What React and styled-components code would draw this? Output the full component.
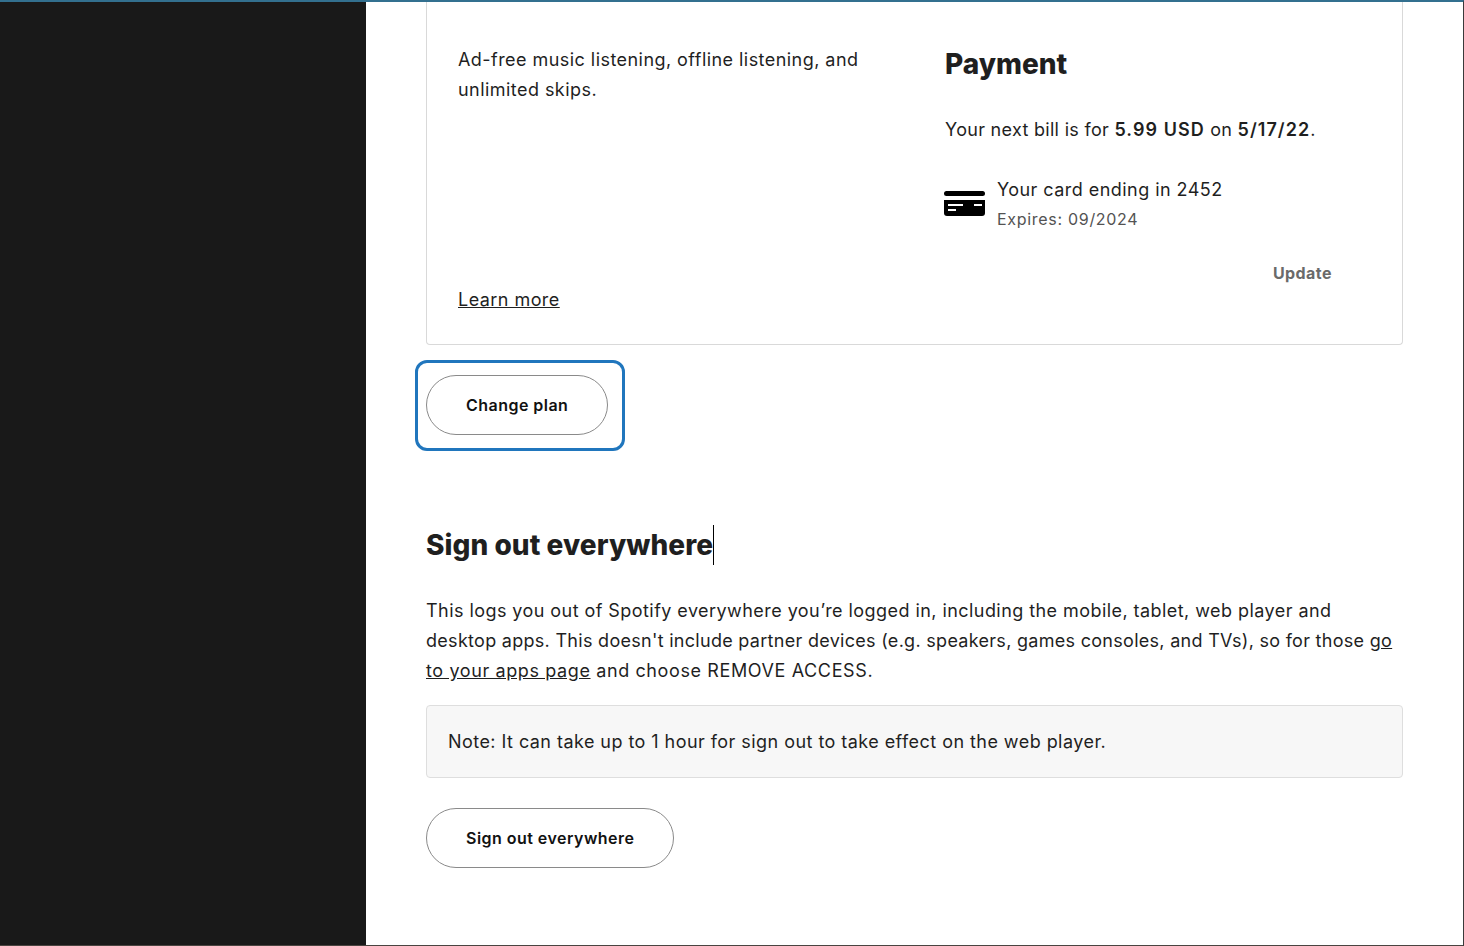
import React from "react";
import styled, { createGlobalStyle } from "styled-components";

const GlobalStyle = createGlobalStyle`
  html, body {
    margin: 0;
    height: 946px;
    overflow: hidden;
    background: #fff;
  }
  body {
    font-family: "Inter", "Liberation Sans", sans-serif;
    font-size: 18px;
    line-height: 30px;
    letter-spacing: 0.45px;
    color: #1f1f1f;
  }
`;

const Page = styled.div`
  display: flex;
  flex-direction: column;
  width: 1464px;
  height: 946px;
  box-sizing: border-box;
  border-top: 2px solid #33708f;
  border-right: 1px solid #3a3a3a;
  border-bottom: 1px solid #4a4440;
`;
const Layout = styled.div`
  display: flex;
  flex: 1;
  min-height: 0;
`;
const Sidebar = styled.aside`
  width: 366px;
  flex: none;
  background: #191919;
`;
const Main = styled.main`
  flex: 1;
  padding: 0 60px;
`;

const Card = styled.section`
  display: grid;
  grid-template-columns: 487px 1fr;
  box-sizing: border-box;
  height: 343px;
  padding: 43px 31px 29px;
  border: 1px solid #d9d9d9;
  border-top: none;
  border-radius: 0 0 4px 4px;
`;
const PlanColumn = styled.div`
  display: flex;
  flex-direction: column;
  justify-content: space-between;
  align-items: flex-start;
`;
const PlanText = styled.p`
  width: 420px;
  margin: 0;
`;
const PaymentColumn = styled.div`
  display: flex;
  flex-direction: column;
`;
const CardTitle = styled.h2`
  margin: -1px 0 31px;
  font-size: 28px;
  line-height: 40px;
  font-weight: 800;
  letter-spacing: 0;
`;
const Bill = styled.p`
  margin: 0 0 30px;
  letter-spacing: 0.3px;
  b {
    font-weight: 600;
    letter-spacing: 1.05px;
  }
`;
const CardRow = styled.div`
  display: flex;
  align-items: center;
  gap: 12px;
  margin-left: -1px;
`;
const CardIcon = styled.svg`
  width: 41px;
  height: 28px;
  flex: none;
  margin-bottom: 1px;
`;
const CardInfo = styled.div`
  display: flex;
  flex-direction: column;
`;
const Expires = styled.span`
  font-size: 16px;
  line-height: 29px;
  letter-spacing: 0.7px;
  color: #535353;
`;
const UpdateLink = styled.a`
  align-self: flex-end;
  margin: 24px 39px 0 0;
  font-size: 16px;
  font-weight: 700;
  color: #6a6a6a;
`;
const TextLink = styled.a`
  color: inherit;
  text-decoration: underline;
`;

const PillButton = styled.button`
  position: relative;
  display: block;
  box-sizing: border-box;
  height: 60px;
  padding: 0 39px;
  background: #fff;
  border: 1px solid #8a8a8a;
  border-radius: 30px;
  font: 600 16px/1 "Inter", "Liberation Sans", sans-serif;
  letter-spacing: 0.47px;
  color: #111;

  ${(p) =>
    p.$focused &&
    `
    &::after {
      content: "";
      position: absolute;
      top: -16px;
      right: -18px;
      bottom: -17px;
      left: -12px;
      border: 3px solid #2076bd;
      border-radius: 12px;
    }
  `}
`;
const ChangePlanRow = styled.div`
  margin-top: 30px;
`;

const SectionTitle = styled.h2`
  width: fit-content;
  margin: 90px 0 31px;
  font-size: 28px;
  line-height: 40px;
  font-weight: 800;
  letter-spacing: 0.05px;
  border-right: 1px solid #000;
`;
const Description = styled.p`
  margin: 0;
`;
const DescriptionLine = styled.span`
  display: block;
  white-space: nowrap;
  letter-spacing: ${(p) => p.$spacing}px;
`;
const Note = styled.div`
  box-sizing: border-box;
  height: 73px;
  margin: 19px 0 30px;
  padding: 21px;
  background: #f7f7f7;
  border: 1px solid #dedede;
  border-radius: 4px;
`;

export default function App() {
  return (
    <>
      <GlobalStyle />
      <Page>
        <Layout>
          <Sidebar />
          <Main>
            <Card>
              <PlanColumn>
                <PlanText>Ad-free music listening, offline listening, and unlimited skips.</PlanText>
                <TextLink href="#">Learn more</TextLink>
              </PlanColumn>
              <PaymentColumn>
                <CardTitle>Payment</CardTitle>
                <Bill>
                  Your next bill is for <b>5.99 USD</b> on <b>5/17/22</b>.
                </Bill>
                <CardRow>
                  <CardIcon viewBox="0 0 41 28">
                    <rect x="0" y="1" width="41" height="5" rx="2.5" fill="#000" />
                    <path d="M0 10h41v13a3 3 0 0 1-3 3H3a3 3 0 0 1-3-3z" fill="#000" />
                    <path d="M4 15h15M4 20h8M30 15h8" stroke="#fff" strokeWidth="2" />
                  </CardIcon>
                  <CardInfo>
                    <span>Your card ending in 2452</span>
                    <Expires>Expires: 09/2024</Expires>
                  </CardInfo>
                </CardRow>
                <UpdateLink>Update</UpdateLink>
              </PaymentColumn>
            </Card>
            <ChangePlanRow>
              <PillButton $focused>Change plan</PillButton>
            </ChangePlanRow>
            <SectionTitle>Sign out everywhere</SectionTitle>
            <Description>
              <DescriptionLine $spacing={0.44}>
                This logs you out of Spotify everywhere you’re logged in, including the mobile, tablet, web player and
              </DescriptionLine>
              <DescriptionLine $spacing={0.29}>
                desktop apps. This doesn't include partner devices (e.g. speakers, games consoles, and TVs), so for those{" "}
                <TextLink href="#">go</TextLink>
              </DescriptionLine>
              <DescriptionLine $spacing={0.61}>
                <TextLink href="#">to your apps page</TextLink> and choose REMOVE ACCESS.
              </DescriptionLine>
            </Description>
            <Note>Note: It can take up to 1 hour for sign out to take effect on the web player.</Note>
            <PillButton>Sign out everywhere</PillButton>
          </Main>
        </Layout>
      </Page>
    </>
  );
}
